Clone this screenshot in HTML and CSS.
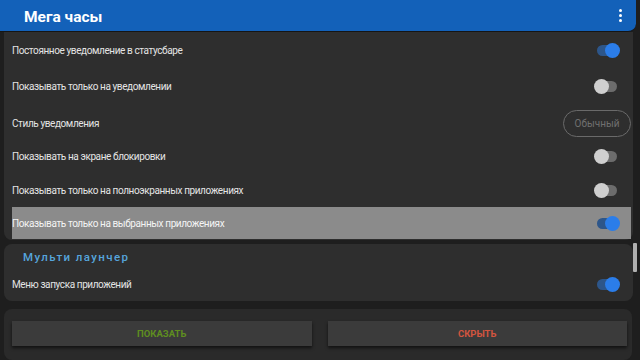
FILE: index.html
```html
<!DOCTYPE html>
<html lang="ru">
<head>
  <meta charset="UTF-8" />
  <meta name="viewport" content="width=device-width, initial-scale=1.0" />
  <title>Мега часы</title>
  <link rel="stylesheet" href="styles.css">
</head>
<body>
  <header class="appbar">
    <h1>Мега часы</h1>
    <div class="menu-dots"><span></span><span></span><span></span></div>
  </header>

  <div class="scroll-area">
    <div class="content">
      <section class="card card-main">
        <div class="row h34">
          <span class="label">Постоянное уведомление в статусбаре</span>
          <span class="toggle on"></span>
        </div>
        <div class="row h39">
          <span class="label">Показывать только на уведомлении</span>
          <span class="toggle"></span>
        </div>
        <div class="row h34">
          <span class="label">Стиль уведомления</span>
          <span class="pill">Обычный</span>
        </div>
        <div class="row h33">
          <span class="label">Показывать на экране блокировки</span>
          <span class="toggle"></span>
        </div>
        <div class="row h34">
          <span class="label">Показывать только на полноэкранных приложениях</span>
          <span class="toggle"></span>
        </div>
        <div class="row h32 selected">
          <span class="label">Показывать только на выбранных приложениях</span>
          <span class="toggle on"></span>
        </div>
      </section>

      <section class="card card-launcher">
        <h2 class="section-title">Мульти лаунчер</h2>
        <div class="row h32">
          <span class="label">Меню запуска приложений</span>
          <span class="toggle on"></span>
        </div>
      </section>
    </div>
    <div class="scrollbar"><div class="thumb"></div></div>
  </div>

  <footer class="card actions">
    <button class="btn btn-show">ПОКАЗАТЬ</button>
    <button class="btn btn-hide">СКРЫТЬ</button>
  </footer>
</body>
</html>
```

FILE: styles.css
```css
* { box-sizing: border-box; margin: 0; padding: 0; }

html, body {
  width: 640px;
  height: 360px;
  overflow: hidden;
  background: #1e1e1e;
  font-family: Roboto, "Noto Sans", sans-serif;
  color: #e4e4e4;
}

.appbar {
  height: 32px;
  width: 636px;
  background: #1361b9;
  border-bottom-right-radius: 8px;
  border-bottom: 1px solid #151515;
  display: flex;
  align-items: center;
  justify-content: space-between;
  padding: 3px 14px 0 24px;
}

.appbar h1 {
  font-size: 15.5px;
  font-weight: 700;
  color: #fff;
}

.menu-dots {
  display: flex;
  flex-direction: column;
  gap: 2px;
  margin-top: -3px;
}

.menu-dots span {
  width: 3px;
  height: 3px;
  border-radius: 50%;
  background: #fff;
}

.scroll-area {
  display: flex;
  height: 272px;
}

.content {
  width: 633px;
  padding-left: 4px;
}

.scrollbar {
  width: 4px;
  padding-top: 211px;
}

.scrollbar .thumb {
  height: 29px;
  background: #b0b0b0;
  border-radius: 1px;
}

.card {
  background: #2e2e2e;
  border-radius: 8px;
}

.card-main {
  height: 208px;
  padding: 1px 2px 0 8px;
  border-top-left-radius: 0;
  border-top-right-radius: 0;
}

.card-launcher {
  margin-top: 4px;
  height: 57px;
  padding-left: 8px;
  padding-right: 2px;
}

.row {
  display: flex;
  align-items: center;
  justify-content: space-between;
  padding-right: 12px;
}

.h32 { height: 32px; }
.h33 { height: 33px; }
.h34 { height: 34px; }
.h39 { height: 39px; }

.row.selected {
  background: #8b8b8b;
  color: #f4f4f4;
}

.label {
  font-size: 10px;
  letter-spacing: -0.4px;
}

.toggle {
  position: relative;
  width: 20px;
  height: 11px;
  border-radius: 6px;
  background: #6c6c6c;
  margin-right: 2px;
}

.toggle::after {
  content: "";
  position: absolute;
  top: -2px;
  left: -3px;
  width: 15px;
  height: 15px;
  border-radius: 50%;
  background: #cfcfcf;
}

.toggle.on {
  background: #2d568a;
}

.toggle.on::after {
  left: auto;
  right: -3px;
  background: #2b7de9;
}

.pill {
  width: 68px;
  height: 27px;
  border: 1px solid #6a6a6a;
  border-radius: 14px;
  color: #707070;
  font-size: 10px;
  display: flex;
  align-items: center;
  justify-content: center;
  margin-right: -12px;
}

.section-title {
  font-size: 11.5px;
  font-weight: 500;
  letter-spacing: 1.4px;
  color: #56a5dc;
  height: 24px;
  line-height: 26px;
  padding-left: 11px;
}

.actions {
  margin: 5px 8px 0 4px;
  height: 51px;
  background: #2a2a2a;
  display: flex;
  align-items: center;
  gap: 16px;
  padding: 0 5px 2px 8px;
}

.btn {
  flex: 1;
  height: 25px;
  border: none;
  background: #3b3b3b;
  box-shadow: 0 2px 3px rgba(0, 0, 0, 0.6);
  font-family: Roboto, sans-serif;
  font-size: 9.5px;
  font-weight: 700;
}

.btn-show { color: #5f8e20; }
.btn-hide { color: #d3553f; }
```
